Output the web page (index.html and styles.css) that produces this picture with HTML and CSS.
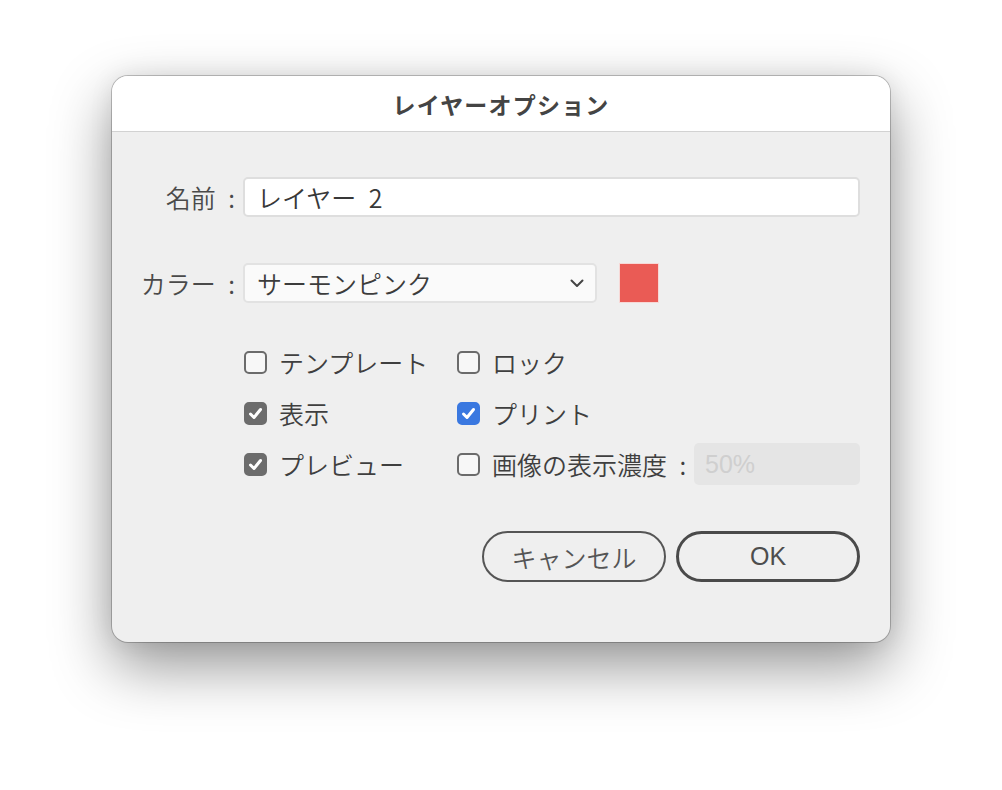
FILE: index.html
```html
<!DOCTYPE html>
<html lang="ja">
<head>
<meta charset="utf-8">
<title>レイヤーオプション</title>
<link rel="stylesheet" href="styles.css">
</head>
<body>
<div class="dialog">
  <div class="titlebar">レイヤーオプション</div>
  <div class="content">
    <div class="row">
      <span class="label">名前&ensp;:</span>
      <div class="textfield">レイヤー&ensp;2</div>
    </div>
    <div class="row color-row">
      <span class="label">カラー&ensp;:</span>
      <div class="select">
        <span>サーモンピンク</span>
        <svg class="chevron" width="14" height="9" viewBox="0 0 14 9"><path d="M1.5 1.5 L7 7 L12.5 1.5" fill="none" stroke="#444" stroke-width="2" stroke-linecap="round" stroke-linejoin="round"/></svg>
      </div>
      <div class="swatch"></div>
    </div>
    <div class="checks">
      <div class="check"><span class="box"></span><span>テンプレート</span></div>
      <div class="check"><span class="box"></span><span>ロック</span></div>
      <div class="check"><span class="box on"><svg viewBox="0 0 23 23" width="23" height="23"><path d="M6.5 12 L10 15.5 L16.5 7.5" fill="none" stroke="#fff" stroke-width="3" stroke-linecap="round" stroke-linejoin="round"/></svg></span><span>表示</span></div>
      <div class="check"><span class="box blue"><svg viewBox="0 0 23 23" width="23" height="23"><path d="M6.5 12 L10 15.5 L16.5 7.5" fill="none" stroke="#fff" stroke-width="3" stroke-linecap="round" stroke-linejoin="round"/></svg></span><span>プリント</span></div>
      <div class="check"><span class="box on"><svg viewBox="0 0 23 23" width="23" height="23"><path d="M6.5 12 L10 15.5 L16.5 7.5" fill="none" stroke="#fff" stroke-width="3" stroke-linecap="round" stroke-linejoin="round"/></svg></span><span>プレビュー</span></div>
      <div class="check"><span class="box"></span><span>画像の表示濃度&ensp;:</span><div class="dimfield">50%</div></div>
    </div>
    <div class="buttons">
      <div class="btn">キャンセル</div>
      <div class="btn default">OK</div>
    </div>
  </div>
</div>
</body>
</html>
```
FILE: styles.css
```css
html, body {
  margin: 0;
  padding: 0;
  background: #ffffff;
}
body {
  font-family: "Noto Sans CJK JP", "Liberation Sans", sans-serif;
  font-weight: 350;
  color: #474747;
  padding: 76px 0 0 112px;
  min-height: 790px;
  box-sizing: border-box;
}
.dialog {
  width: 778px;
  height: 566px;
  box-sizing: border-box;
  background: #efefef;
  border-radius: 16px;
  overflow: hidden;
  box-shadow: 0 0 0 1px rgba(0,0,0,0.22), 0 24px 60px rgba(0,0,0,0.42), 0 0 24px rgba(0,0,0,0.08);
}
.titlebar {
  height: 55px;
  background: #ffffff;
  border-bottom: 1px solid #d2d2d2;
  display: flex;
  align-items: center;
  justify-content: center;
  font-size: 23px;
  font-weight: 700;
  color: #444;
  letter-spacing: 1.2px;
}
.content {
  padding: 45px 30px 0 0;
}
.row {
  display: flex;
  align-items: center;
  height: 40px;
}
.color-row {
  margin-top: 46px;
}
.label {
  width: 123px;
  margin-right: 8px;
  text-align: right;
  font-size: 25px;
  line-height: 40px;
  color: #4a4a4a;
  white-space: pre;
}
.textfield {
  flex: 1;
  height: 40px;
  box-sizing: border-box;
  background: #ffffff;
  border: 2px solid #dedede;
  border-radius: 5px;
  padding-left: 12px;
  font-size: 25px;
  line-height: 36px;
  color: #383838;
  white-space: pre;
}
.select {
  width: 354px;
  height: 40px;
  box-sizing: border-box;
  background: #fafafa;
  border: 2px solid #e2e2e2;
  border-radius: 5px;
  padding: 0 11px 0 12px;
  display: flex;
  align-items: center;
  justify-content: space-between;
  font-size: 25px;
  line-height: 36px;
  color: #3c3c3c;
}
.chevron {
  display: block;
}
.swatch {
  width: 40px;
  height: 40px;
  box-sizing: border-box;
  margin-left: 22px;
  background: #ea5b55;
  border: 1px solid #f7d8d6;
}
.checks {
  margin-top: 38px;
  margin-left: 132px;
  display: grid;
  grid-template-columns: 213px 403px;
  grid-auto-rows: 42px;
  row-gap: 9px;
}
.check {
  display: flex;
  align-items: center;
  font-size: 25px;
  color: #3f3f3f;
  white-space: pre;
}
.box {
  width: 23px;
  height: 23px;
  box-sizing: border-box;
  border: 2px solid #6b6b6b;
  border-radius: 5px;
  background: #f7f7f7;
  margin-right: 12px;
  flex: none;
  position: relative;
}
.box svg {
  position: absolute;
  left: -2px;
  top: -2px;
}
.box.on {
  background: #6c6c6c;
  border-color: #6c6c6c;
}
.box.blue {
  background: #3a78e0;
  border-color: #3a78e0;
}
.dimfield {
  margin-left: auto;
  width: 166px;
  height: 42px;
  box-sizing: border-box;
  background: #e5e5e5;
  border-radius: 5px;
  padding-left: 11px;
  font-family: "Liberation Sans", "Noto Sans CJK JP", sans-serif;
  font-weight: 400;
  font-size: 25px;
  line-height: 42px;
  color: #cfcfcf;
}
.buttons {
  margin-top: 46px;
  display: flex;
  justify-content: flex-end;
  gap: 10px;
}
.btn {
  width: 184px;
  height: 51px;
  box-sizing: border-box;
  border: 2px solid #555;
  border-radius: 26px;
  display: flex;
  align-items: center;
  justify-content: center;
  font-size: 25px;
  color: #555;
}
.btn.default {
  border: 3px solid #4a4a4a;
  font-family: "Liberation Sans", "Noto Sans CJK JP", sans-serif;
  font-weight: 400;
  color: #4d4d4d;
}
```
